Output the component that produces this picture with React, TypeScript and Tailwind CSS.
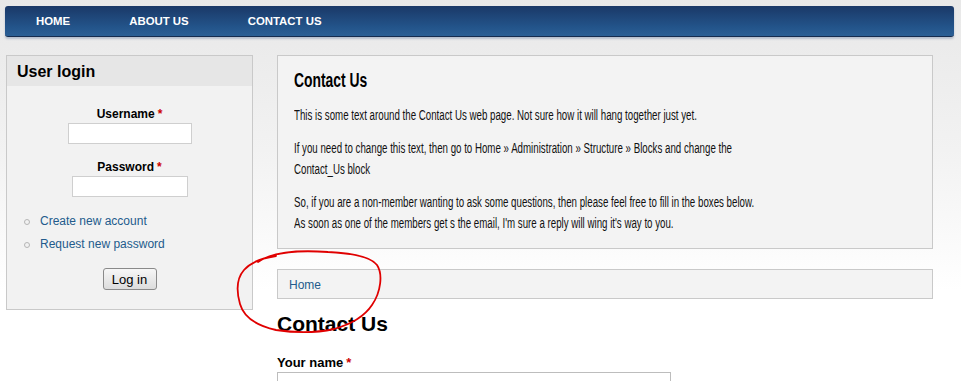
import React from 'react';

const navItems = ['HOME', 'ABOUT US', 'CONTACT US'];

const Required = () => <span className="text-[#cc0000] ml-[3px]">*</span>;

const Bullet = () => (
  <span className="inline-block w-[6px] h-[6px] rounded-full border border-[#b5b5b5] mr-[10px]" />
);

const App: React.FC = () => {
  return (
    <div
      className="relative w-full min-h-[381px] overflow-hidden bg-[linear-gradient(to_bottom,#e8e8e8_0px,#f2f2f2_150px,#ffffff_290px)] pt-[6px] text-black"
      style={{ fontFamily: '"Liberation Sans", Arial, sans-serif' }}
    >
      {/* top menu */}
      <nav className="ml-[5px] w-[949px] h-[31px] rounded-[3px] bg-[linear-gradient(to_bottom,#1a3867,#23548a_70%,#2a5f95)] border-b border-[#142c4f] shadow-[0_2px_2px_rgba(120,140,170,0.45)] flex items-center pl-[31px] gap-[59px]">
        {navItems.map((item) => (
          <a key={item} className="text-white font-bold text-[11.4px] leading-none pt-[1px]">
            {item}
          </a>
        ))}
      </nav>

      <div className="flex items-start mt-[18px]">
        {/* sidebar */}
        <aside className="ml-[6px] w-[247px] border border-[#c9c9c9] bg-[#f2f2f2]">
          <h2 className="h-[30px] bg-[#e6e6e6] pl-[10px] pt-[1px] flex items-center font-bold text-[16px] leading-none">
            User login
          </h2>
          <div className="flex flex-col items-center pt-[21px] pb-[19px]">
            <label className="font-bold text-[12px] leading-[14px]">
              Username<Required />
            </label>
            <input className="mt-[2px] w-[124px] h-[21px] bg-white border border-[#cfcfcf] outline-none" />
            <label className="mt-[16px] font-bold text-[12px] leading-[14px]">
              Password<Required />
            </label>
            <input
              type="password"
              className="mt-[2px] w-[116px] h-[21px] bg-white border border-[#cfcfcf] outline-none"
            />
            <ul className="self-start mt-[13px] pl-[17px] text-[12px] leading-[23px] text-[#235b8c]">
              <li className="flex items-center">
                <Bullet />
                <a>Create new account</a>
              </li>
              <li className="flex items-center">
                <Bullet />
                <a>Request new password</a>
              </li>
            </ul>
            <button className="mt-[12px] w-[54px] h-[22px] rounded-[3px] border border-[#8a8a8a] bg-[linear-gradient(to_bottom,#f7f7f7,#dcdcdc)] text-[13px] leading-none">
              Log in
            </button>
          </div>
        </aside>

        {/* main column */}
        <main className="ml-[24px] w-[656px]">
          <section className="border border-[#c9c9c9] bg-[#f3f3f3] pl-[16px] pr-[10px] pt-[13px] pb-[14px]">
            {/* the block text in the picture is set in a narrow face */}
            <div className="w-[672px] origin-left scale-x-[0.694] text-[#111]">
              <h2 className="font-bold text-[20px] leading-[22px] mb-[14px] text-black">Contact Us</h2>
              <p className="text-[14px] leading-[21px] mb-[12px]">
                This is some text around the Contact Us web page. Not sure how it will hang together just yet.
              </p>
              <p className="text-[14px] leading-[21px] mb-[12px]">
                If you need to change this text, then go to Home » Administration » Structure » Blocks and change the
                Contact_Us block
              </p>
              <p className="text-[14px] leading-[21px]">
                So, if you are a non-member wanting to ask some questions, then please feel free to fill in the boxes
                below. As soon as one of the members get s the email, I'm sure a reply will wing it's way to you.
              </p>
            </div>
          </section>

          <div className="mt-[20px] h-[30px] border border-[#c9c9c9] bg-[#f3f3f3] pl-[11px] pt-[1px] flex items-center text-[12px] text-[#235b8c]">
            <a>Home</a>
          </div>

          <h1 className="mt-[13px] font-bold text-[21px] leading-[24px]">Contact Us</h1>

          <label className="block mt-[19px] font-bold text-[13px] leading-[15px]">
            Your name<Required />
          </label>
          <input className="mt-[2px] w-[394px] h-[24px] bg-white border border-[#bdbdbd] outline-none" />
        </main>
      </div>

      {/* hand-drawn annotation */}
      <svg className="absolute inset-0 pointer-events-none" width="961" height="381" viewBox="0 0 961 381">
        <path
          d="M258 262 C272 252 300 250 328 252 C350 253 370 256 377 265 C383 274 381 292 372 305 C364 317 352 324 334 329 C316 333 296 333 276 330 C258 326 244 318 240 304 C236 290 237 278 244 270 C250 263 262 258 276 256"
          fill="none"
          stroke="#e00000"
          strokeWidth="1.8"
          strokeLinecap="round"
        />
      </svg>
    </div>
  );
};

export default App;
